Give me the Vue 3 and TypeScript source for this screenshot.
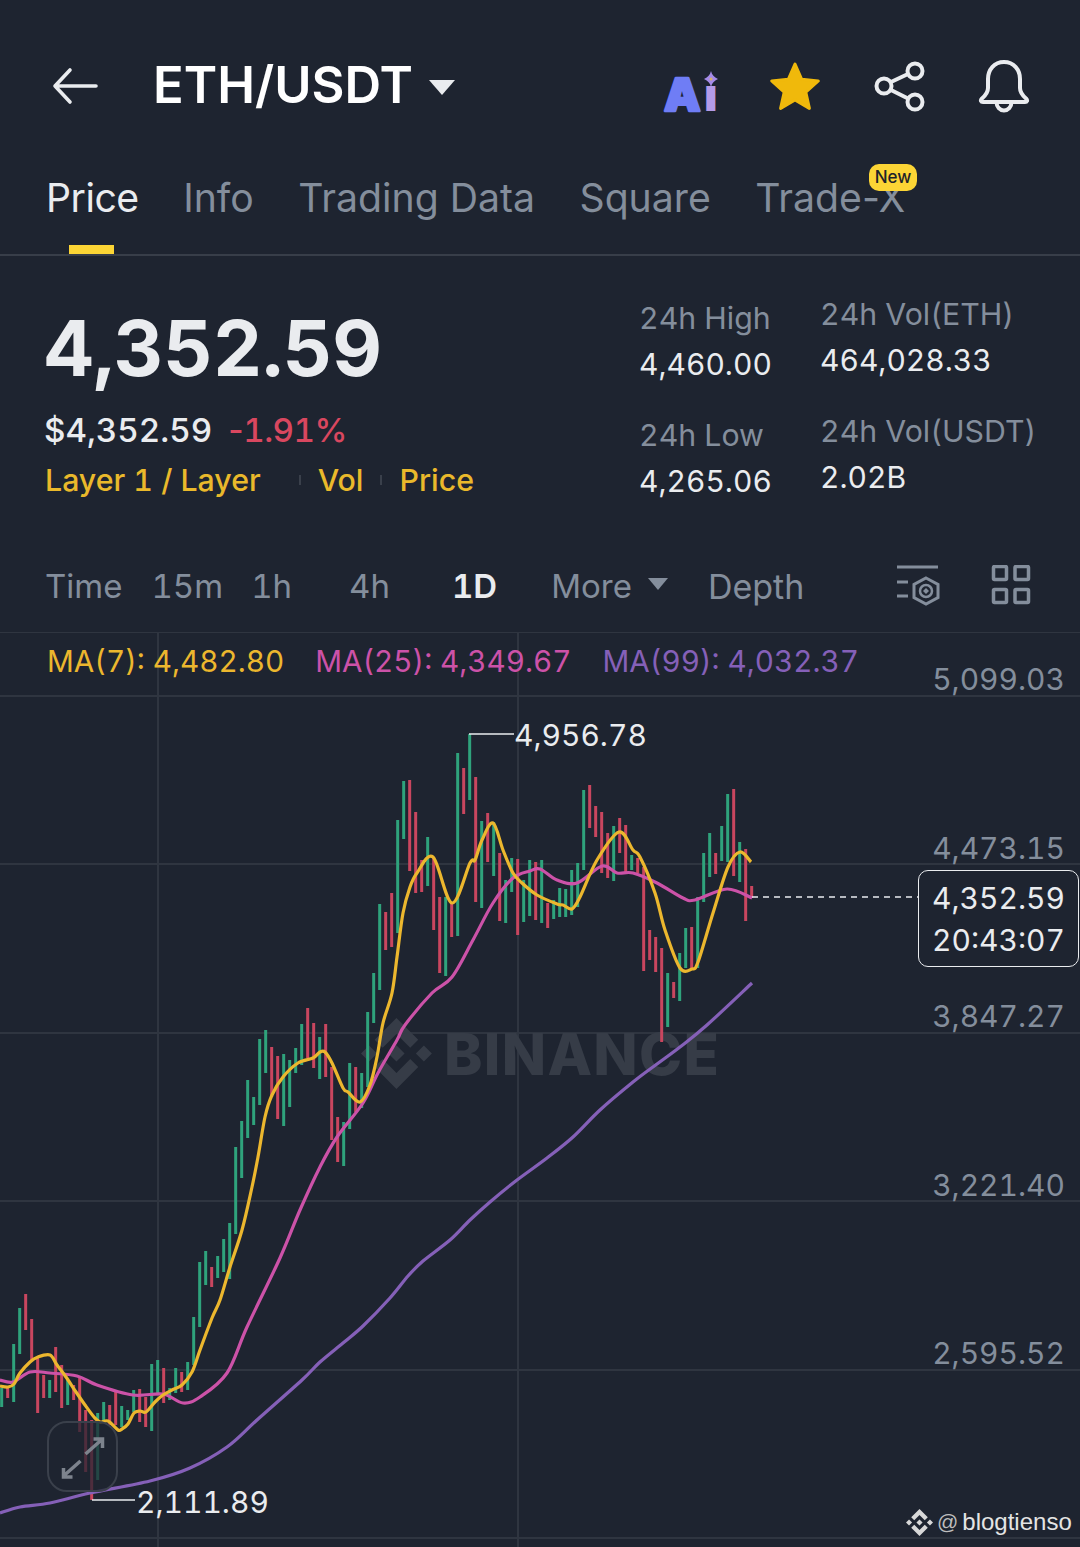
<script setup lang="ts">
// [top, bottom, green?] in page pixels, one candle every 6px starting at x = 1.67
type Candle = [number, number, number]
const candles: Candle[] = [
  [1388,1407,1],[1387,1398,0],[1344,1402,1],[1308,1354,1],[1294,1330,0],[1319,1360,0],[1358,1413,0],[1375,1398,0],
  [1380,1398,1],[1347,1392,0],[1365,1408,0],[1380,1405,1],[1385,1400,0],[1377,1432,0],[1410,1472,0],[1420,1500,0],
  [1413,1480,1],[1402,1423,1],[1405,1425,0],[1392,1425,0],[1406,1427,1],[1410,1420,1],[1390,1412,1],[1389,1422,0],
  [1397,1427,0],[1364,1431,1],[1360,1394,1],[1368,1403,0],[1388,1400,1],[1368,1393,1],[1372,1392,0],[1362,1390,1],
  [1317,1365,1],[1262,1327,1],[1251,1285,1],[1267,1287,0],[1256,1278,1],[1239,1272,1],[1223,1279,1],[1147,1234,1],
  [1121,1178,1],[1080,1138,1],[1097,1125,1],[1039,1105,1],[1030,1073,1],[1047,1097,0],[1056,1119,0],[1054,1126,1],
  [1060,1107,1],[1048,1073,1],[1024,1065,1],[1008,1058,0],[1023,1068,0],[1037,1079,1],[1024,1077,0],[1067,1140,0],
  [1117,1162,0],[1122,1166,1],[1063,1129,1],[1067,1112,0],[1073,1108,1],[1012,1087,1],[973,1023,1],[904,990,1],
  [912,950,0],[893,947,0],[820,933,1],[781,839,1],[780,871,0],[812,893,0],[860,892,0],[837,886,1],
  [857,930,0],[897,973,0],[897,976,1],[902,937,0],[753,936,1],[768,814,0],[734,800,1],[777,902,0],
  [821,908,1],[813,862,0],[822,876,1],[853,921,0],[880,923,1],[858,892,1],[859,935,0],[880,922,1],
  [860,916,1],[862,920,0],[860,923,1],[903,928,0],[900,919,1],[888,917,1],[889,917,1],[870,915,1],
  [863,907,1],[790,870,1],[785,828,0],[806,837,0],[812,873,0],[833,878,0],[826,881,1],[818,853,0],
  [825,873,0],[855,870,1],[858,873,0],[867,971,0],[930,960,0],[937,972,0],[948,1042,0],[973,1027,1],
  [982,998,0],[953,1001,1],[928,968,1],[927,968,0],[897,968,1],[853,902,1],[833,877,1],[853,874,0],
  [826,861,1],[794,862,1],[789,876,0],[842,882,1],[849,921,0],[886,898,0],
]

const ma7 = [
  [0,1386],[8,1387],[14,1384],[20,1373],[30,1362],[38,1357],[50,1355],[57,1365],[66,1377],[76,1392],[85,1405],[94,1417],
  [100,1422],[108,1421],[118,1430],[122,1429],[128,1424],[134,1413],[140,1411],[146,1412],[155,1402],[163,1395],[172,1390],
  [182,1385],[192,1372],[200,1350],[212,1318],[220,1300],[230,1267],[242,1230],[252,1187],[258,1157],[265,1117],[272,1095],
  [283,1077],[298,1063],[313,1058],[320,1052],[325,1052],[332,1063],[343,1088],[348,1092],[360,1102],[370,1085],[377,1057],
  [383,1023],[392,993],[397,957],[403,913],[410,887],[417,873],[433,857],[452,903],[470,863],[475,860],[482,840],[493,823],
  [503,850],[513,873],[522,883],[537,895],[557,904],[563,905],[572,909],[580,897],[597,860],[619,832],[633,850],[640,857],
  [655,893],[665,930],[680,968],[692,969],[698,962],[713,913],[728,867],[740,852],[751,862],
]
const ma25 = [
  [0,1380],[13,1382],[30,1372],[50,1373],[77,1376],[97,1385],[133,1395],[163,1394],[183,1403],[200,1397],[227,1373],
  [247,1327],[280,1258],[300,1210],[320,1167],[337,1137],[363,1103],[378,1073],[397,1040],[405,1025],[432,993],[452,977],[473,940],
  [493,903],[513,878],[530,871],[540,869],[557,880],[577,883],[602,866],[617,873],[633,873],[657,883],[683,898],[695,900],
  [727,889],[752,898],
]
const ma99 = [
  [0,1513],[20,1507],[50,1503],[90,1493],[150,1481],[190,1468],[227,1447],[257,1420],[302,1380],[320,1362],[343,1343],
  [363,1326],[390,1298],[408,1276],[423,1261],[450,1240],[470,1220],[490,1202],[517,1180],[547,1158],[573,1137],[600,1110],
  [633,1082],[657,1064],[680,1047],[707,1025],[752,983],
]

// catmull-rom through the sampled points so the averages do not look jagged
function smooth(pts: number[][]): string {
  let d = `M${pts[0][0]} ${pts[0][1]}`
  for (let i = 0; i < pts.length - 1; i++) {
    const p0 = pts[Math.max(i - 1, 0)]
    const p1 = pts[i]
    const p2 = pts[i + 1]
    const p3 = pts[Math.min(i + 2, pts.length - 1)]
    const c1x = p1[0] + (p2[0] - p0[0]) / 6
    const c1y = p1[1] + (p2[1] - p0[1]) / 6
    const c2x = p2[0] - (p3[0] - p1[0]) / 6
    const c2y = p2[1] - (p3[1] - p1[1]) / 6
    d += `C${c1x.toFixed(1)} ${c1y.toFixed(1)} ${c2x.toFixed(1)} ${c2y.toFixed(1)} ${p2[0]} ${p2[1]}`
  }
  return d
}

const gridY = [696, 864, 1033, 1201, 1370, 1538]
const axis = [
  { label: '5,099.03', y: 679 },
  { label: '4,473.15', y: 848 },
  { label: '3,847.27', y: 1016 },
  { label: '3,221.40', y: 1185 },
  { label: '2,595.52', y: 1353 },
]
const tabs = ['Price', 'Info', 'Trading Data', 'Square', 'Trade-X']
const logoOuter = 'M38.73 53.2l24.59-24.58 24.6 24.6 14.3-14.31L63.32 0 24.43 38.9zM0 63.31l14.3-14.31 14.31 14.31-14.31 14.3zM38.73 73.41l24.59 24.59 24.6-24.6 14.31 14.29-38.9 38.91-38.91-38.88zM98 63.31l14.3-14.31 14.31 14.3-14.31 14.32zM77.83 63.3L63.32 48.78 52.59 59.51l-1.24 1.23-2.54 2.54 14.51 14.5 14.51-14.47z'
</script>

<template>
  <div class="screen">
    <header class="top">
      <svg class="back" width="46" height="38" viewBox="0 0 46 38" fill="none" stroke="#eaecef" stroke-width="3.6" stroke-linecap="round" stroke-linejoin="round">
        <path d="M44 19H3M18 3L3 19l15 16" />
      </svg>
      <span class="pair">ETH/USDT</span>
      <span class="caret"></span>
      <div class="top-icons">
        <svg class="ai" width="60" height="60" viewBox="0 0 60 60">
          <text x="4" y="55" class="ai-a">A</text>
          <text x="44" y="55" class="ai-i">ı</text>
          <path d="M51 15c1 4 3 6 7 8-4 2-6 4-7 8-1-4-3-6-7-8 4-2 6-4 7-8z" fill="#a58be8" />
          <circle cx="51" cy="23" r="1.500" fill="#d9b06a" />
        </svg>
        <svg width="54" height="52" viewBox="0 0 54 52">
          <path d="M27 4l6.700 15.300 16.600 1.700-12.500 11.100 3.600 16.300L27 39.900l-14.400 8.500 3.600-16.300L3.700 21l16.600-1.700z" fill="#f0b90b" stroke="#f0b90b" stroke-width="3" stroke-linejoin="round" />
        </svg>
        <svg width="52" height="52" viewBox="0 0 52 52" fill="none" stroke="#eaecef" stroke-width="4">
          <circle cx="41" cy="11" r="7.500" />
          <circle cx="41" cy="42" r="7.500" />
          <circle cx="10" cy="26" r="7.500" />
          <path d="M17 22l17-8M17 30l17 8.500" />
        </svg>
        <svg width="52" height="54" viewBox="0 0 52 54" fill="none" stroke="#eaecef" stroke-width="4" stroke-linejoin="round">
          <path d="M26 3c-10 0-16 8-16 17v9c0 4-2 7-6 10.500-2 2-1 3.500 1 3.500h42c2 0 3-1.500 1-3.500-4-3.500-6-6.500-6-10.500v-9c0-9-6-17-16-17z" />
          <path d="M18.500 43c0 5 3.500 8.500 7.500 8.500s7.500-3.500 7.500-8.500" />
        </svg>
      </div>
    </header>

    <nav class="tabs">
      <span v-for="(tab, i) in tabs" :key="tab" class="tab" :class="{ active: i === 0 }">
        {{ tab }}
        <em v-if="tab === 'Trade-X'" class="new">New</em>
      </span>
    </nav>

    <section class="stats">
      <div class="stats-left">
        <div class="price">4,352.59</div>
        <div class="sub"><span>$4,352.59</span><span class="neg"><span class="minus">-</span>1.91%</span></div>
        <div class="tags">
          <span>Layer 1 / Layer</span><i></i><span>Vol</span><i></i><span>Price</span>
        </div>
      </div>
      <div class="col col-a">
        <div class="lbl">24h High</div>
        <div class="val">4,460.00</div>
        <div class="lbl second">24h Low</div>
        <div class="val">4,265.06</div>
      </div>
      <div class="col col-b">
        <div class="lbl">24h Vol(ETH)</div>
        <div class="val">464,028.33</div>
        <div class="lbl second">24h Vol(USDT)</div>
        <div class="val">2.02B</div>
      </div>
    </section>

    <div class="times">
      <span class="t-time">Time</span>
      <span class="t-15m">15m</span>
      <span class="t-1h">1h</span>
      <span class="t-4h">4h</span>
      <span class="t-1d">1D</span>
      <span class="t-more">More<b class="more-caret"></b></span>
      <span class="t-depth">Depth</span>
      <svg class="t-icon" width="44" height="44" viewBox="0 0 44 44" fill="none" stroke="#848e9c" stroke-width="3">
        <path d="M1 3h41M1 18h11M1 32h11" />
        <path d="M30 14l12 6.500v13L30 40l-12-6.500v-13z" />
        <circle cx="30" cy="27" r="6" stroke-width="2.500" />
        <path d="M30 24l3 3-3 3-3-3z" fill="#848e9c" stroke="none" />
      </svg>
      <svg class="t-icon grid-icon" width="42" height="42" viewBox="0 0 42 42" fill="none" stroke="#848e9c" stroke-width="3.500">
        <rect x="3.500" y="1.500" width="13" height="13" rx="1" />
        <rect x="25" y="1.500" width="13.500" height="13" rx="1" />
        <rect x="3.500" y="24.500" width="13" height="13" rx="1" />
        <rect x="25" y="24.500" width="13.500" height="13" rx="1" />
      </svg>
    </div>

    <section class="chart">
      <svg class="plot" width="1080" height="915" viewBox="0 632 1080 915">
        <g stroke="#2f3540" stroke-width="2">
          <line x1="0" x2="1080" y1="632" y2="632" />
          <line v-for="y in gridY" :key="y" x1="0" x2="1080" :y1="y" :y2="y" />
          <line x1="158" x2="158" y1="632" y2="1547" />
          <line x1="518" x2="518" y1="632" y2="1547" />
        </g>
        <path :d="logoOuter" fill="#363c47" transform="translate(361 1018) scale(0.56)" />
        <text x="444" y="1075" class="mark">BINANCE</text>
        <line
          v-for="(c, i) in candles"
          :key="i"
          :x1="1.67 + i * 6"
          :x2="1.67 + i * 6"
          :y1="c[0]"
          :y2="c[1]"
          :stroke="c[2] ? '#2fa37c' : '#c9465f'"
          stroke-width="3"
        />
        <path :d="smooth(ma99)" fill="none" stroke="#8560b8" stroke-width="3.200" />
        <path :d="smooth(ma25)" fill="none" stroke="#cc52a8" stroke-width="3.200" />
        <path :d="smooth(ma7)" fill="none" stroke="#ecb72e" stroke-width="3.200" />
        <line x1="469" x2="514" y1="734" y2="734" stroke="#eaecef" stroke-width="1.500" />
        <line x1="92" x2="135" y1="1500" y2="1500" stroke="#eaecef" stroke-width="1.500" />
        <line x1="752" x2="918" y1="897" y2="897" stroke="#eaecef" stroke-width="1.500" stroke-dasharray="6 5" />
      </svg>

      <div class="ma-row">
        <span class="ma7">MA(7): 4,482.80</span>
        <span class="ma25">MA(25): 4,349.67</span>
        <span class="ma99">MA(99): 4,032.37</span>
      </div>

      <span v-for="a in axis" :key="a.label" class="axis" :style="{ top: a.y - 632 - 20 + 'px' }">{{ a.label }}</span>

      <span class="peak high">4,956.78</span>
      <span class="peak low">2,111.89</span>

      <div class="now">
        <span>4,352.59</span>
        <span>20:43:07</span>
      </div>

      <div class="expand">
        <svg width="50" height="50" viewBox="0 0 50 50" fill="none" stroke="#7d838d" stroke-width="3.500">
          <path d="M27.500 22l17-15M35.500 7h9v9M22.500 29l-17 15M5.500 36v9h9" />
        </svg>
      </div>

      <div class="credit">
        <svg width="27" height="27" viewBox="0 0 126.610 126.610"><path :d="logoOuter" fill="#d8d8d8" /></svg>
        <span class="at">@</span>
        <span>blogtienso</span>
      </div>
    </section>
  </div>
</template>

<style scoped>
.screen {
  width: 1080px;
  height: 1547px;
  overflow: hidden;
  background: #1e2430;
  color: #eaecef;
  font-family: Inter, "Noto Sans", sans-serif;
  font-variant-numeric: tabular-nums;
}

.top {
  display: flex;
  align-items: center;
  height: 172px;
  padding: 0 50px 0 52px;
  box-sizing: border-box;
}

.pair {
  margin-left: 55px;
  margin-bottom: 4px;
  font-size: 50.7px;
  font-weight: 600;
  color: #fff;
}

.caret {
  width: 0;
  height: 0;
  margin-left: 16px;
  margin-top: 2px;
  border-left: 13px solid transparent;
  border-right: 13px solid transparent;
  border-top: 15px solid #eaecef;
}

.top-icons {
  display: flex;
  align-items: center;
  gap: 52px;
  margin-left: auto;
}

.ai {
  margin-right: -4px;
}

.ai-a {
  font-size: 46px;
  font-weight: 900;
  fill: #6f7df5;
  stroke: #6f7df5;
  stroke-width: 2.5px;
  stroke-linejoin: round;
}

.ai-i {
  font-size: 46px;
  font-weight: 900;
  fill: #b49be8;
}

.tabs {
  display: flex;
  gap: 44.5px;
  height: 82px;
  padding-left: 46px;
  border-bottom: 2px solid #383e49;
  font-size: 39.2px;
  font-variant-numeric: normal;
  color: #848e9c;
}

.tab {
  position: relative;
  line-height: 52px;
}

.tab.active {
  color: #eaecef;
  letter-spacing: -0.5px;
}

.tab.active::after {
  content: "";
  position: absolute;
  left: 23px;
  bottom: 0;
  width: 45px;
  height: 9px;
  background: #fcd535;
}

.new {
  position: absolute;
  top: -8px;
  right: -12px;
  padding: 0 6px;
  height: 27px;
  line-height: 27px;
  border-radius: 10px;
  background: #fcd535;
  color: #1e2329;
  font-size: 17px;
  font-style: normal;
  font-weight: 500;
}

.stats {
  display: flex;
  height: 292px;
  padding-left: 44px;
}

.stats-left {
  width: 595px;
  padding-top: 46px;
}

.price {
  font-size: 77px;
  line-height: 92px;
  font-weight: 700;
  letter-spacing: -0.3px;
}

.sub {
  display: flex;
  gap: 16px;
  margin-top: 14px;
  font-size: 33.2px;
  line-height: 44px;
  font-weight: 500;
}

.neg {
  color: #d9475f;
  letter-spacing: -0.5px;
}

.minus {
  font-variant-numeric: normal;
}

.tags {
  display: flex;
  align-items: center;
  margin-top: 6px;
  padding-left: 1px;
  font-size: 30.3px;
  line-height: 44px;
  font-weight: 500;
  color: #eab92b;
}

.tags i {
  width: 2px;
  height: 10px;
  margin: 0 17px 0 38px;
  background: #3a404b;
}

.tags i:last-of-type {
  margin: 0 17px;
}

.col {
  font-size: 30.3px;
}

.col-a {
  width: 181px;
  padding-top: 40px;
}

.col-b {
  padding-top: 36px;
}

.lbl {
  line-height: 44px;
  color: #848e9c;
}

.lbl.second {
  margin-top: 27px;
}

.val {
  margin-top: 2px;
  font-size: 30px;
  line-height: 44px;
  color: #eaecef;
}

.times {
  display: flex;
  align-items: center;
  height: 84px;
  box-sizing: border-box;
  padding: 0 48px 8px 45px;
  font-size: 33px;
  color: #848e9c;
}

.t-15m { margin-left: 29px; }
.t-1h { margin-left: 28px; }
.t-4h { margin-left: 57px; }
.t-1d { margin-left: 62px; color: #eaecef; font-weight: 600; }
.t-more { margin-left: 54px; display: flex; align-items: center; }
.t-depth { margin-left: 40px; font-size: 34px; }
.t-icon { margin-left: auto; }
.grid-icon { margin-left: 50px; }

.more-caret {
  width: 0;
  height: 0;
  margin-left: 16px;
  margin-bottom: 4px;
  border-left: 10px solid transparent;
  border-right: 10px solid transparent;
  border-top: 12px solid #848e9c;
}

.chart {
  position: relative;
  height: 915px;
}

.plot {
  position: absolute;
  left: 0;
  top: 0;
  display: block;
}

.mark {
  font-family: Inter, sans-serif;
  font-size: 58px;
  font-weight: 800;
  fill: #363c47;
  letter-spacing: 1.3px;
}

.ma-row {
  position: absolute;
  left: 47px;
  top: 8px;
  display: flex;
  gap: 31px;
  font-size: 29.7px;
  line-height: 42px;
}

.ma7 { color: #ecb72e; }
.ma25 { color: #cc52a8; }
.ma99 { color: #8560b8; }

.axis {
  position: absolute;
  right: 15px;
  font-size: 30px;
  line-height: 40px;
  color: #848e9c;
}

.peak {
  position: absolute;
  font-size: 30px;
  line-height: 40px;
  color: #eaecef;
}

.high {
  left: 514px;
  top: 83px;
}

.low {
  left: 136px;
  top: 850px;
}

.now {
  position: absolute;
  left: 918px;
  top: 238px;
  width: 161px;
  height: 97px;
  box-sizing: border-box;
  display: flex;
  flex-direction: column;
  align-items: center;
  justify-content: center;
  gap: 2px;
  border: 1.500px solid #eaecef;
  border-radius: 10px;
  background: #1e2430;
  font-size: 30px;
  line-height: 40px;
}

.expand {
  position: absolute;
  left: 47px;
  top: 789px;
  width: 71px;
  height: 71px;
  box-sizing: border-box;
  display: flex;
  align-items: center;
  justify-content: center;
  border: 2px solid #3a404b;
  border-radius: 20px;
  background: rgba(30, 36, 48, 0.72);
}

.credit {
  position: absolute;
  left: 906px;
  top: 874px;
  display: flex;
  align-items: center;
  gap: 4px;
  font-family: "Liberation Sans", Arial, sans-serif;
  font-size: 24px;
  line-height: 32px;
  color: #e4e4e4;
}

.at {
  color: #bdbdbd;
  font-size: 21px;
}
</style>

<style>
body {
  background: #1e2430;
}
</style>
